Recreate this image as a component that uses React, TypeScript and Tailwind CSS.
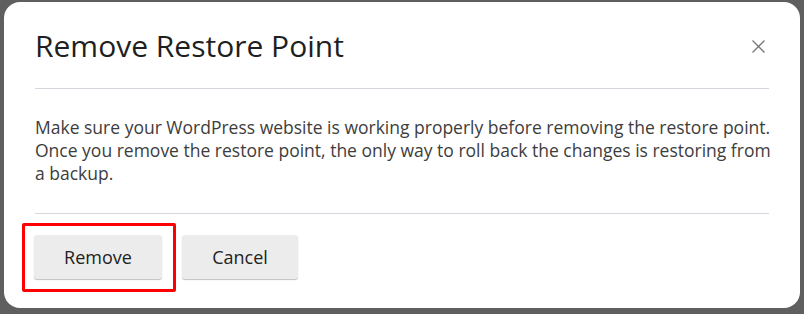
export default function App() {
  return (
    <div className="w-[804px] h-[314px] bg-[#5f5f5f] pt-[2px] pl-[4px] overflow-hidden" style={{ fontFamily: '"Open Sans", sans-serif' }}>
      <div className="w-[796px] h-[306px] bg-white rounded-[16px] px-[31px]">
        {/* Header */}
        <div className="flex items-center justify-between h-[87px] border-b border-[#d6d6de] pt-[2px]">
          <h2 className="text-[30px] leading-[40px] text-[#1f1f1f]">Remove Restore Point</h2>
          <button className="mr-[4px] text-[#777]">
            <svg width="13" height="13" viewBox="0 0 13 13" fill="none" stroke="currentColor" strokeWidth="1.3">
              <path d="M0.5 0.5L12.5 12.5M12.5 0.5L0.5 12.5" />
            </svg>
          </button>
        </div>

        {/* Body */}
        <div className="border-b border-[#d6d6de] pt-[27px] pb-[28px]">
          <p className="-mr-[10px] text-[17.5px] leading-[23px] text-[#3d3d3d]">
            Make sure your WordPress website is working properly before removing the restore point. Once you remove the restore point, the only way to roll back the changes is restoring from a backup.
          </p>
        </div>

        {/* Actions */}
        <div className="flex gap-[20px] pt-[21px] -ml-[1px]">
          <div className="relative">
            <button className="w-[128px] h-[44px] bg-[#ececec] rounded-[3px] shadow-[0_1px_1px_rgba(0,0,0,0.25)] text-[18px] font-medium text-[#222]">
              Remove
            </button>
            <div className="absolute -left-[12px] -top-[12px] w-[154px] h-[69px] border-[3px] border-[#ff0000] rounded-[2px]" />
          </div>
          <button className="w-[116px] h-[44px] bg-[#ececec] rounded-[3px] shadow-[0_1px_1px_rgba(0,0,0,0.25)] text-[18px] font-medium text-[#222]">
            Cancel
          </button>
        </div>
      </div>
    </div>
  )
}
